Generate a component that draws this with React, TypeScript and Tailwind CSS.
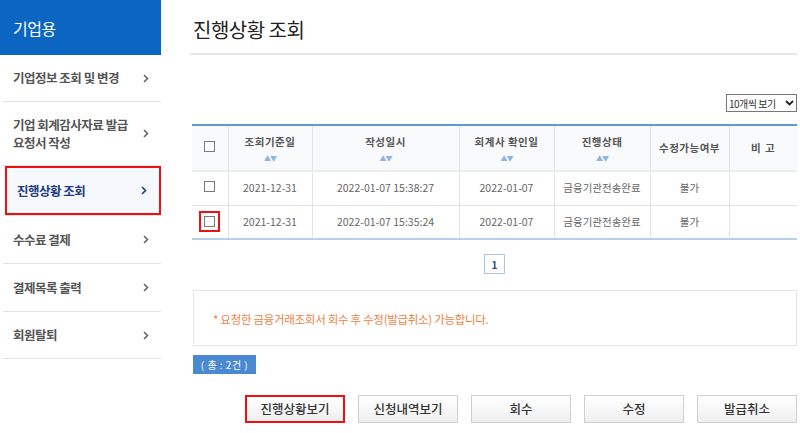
import React from "react";

const menu = [
  { label: ["기업정보 조회 및 변경"], h: "h-[47px]" },
  { label: ["기업 회계감사자료 발급", "요청서 작성"], h: "h-[64px]" },
  { label: ["진행상황 조회"], h: "h-[50px]", active: true },
  { label: ["수수료 결제"], h: "h-[48px]" },
  { label: ["결제목록 출력"], h: "h-[48px]" },
  { label: ["회원탈퇴"], h: "h-[47px]" },
];

const rows = [
  { base: "2021-12-31", created: "2022-01-07 15:38:27", confirm: "2022-01-07", status: "금융기관전송완료", editable: "불가" },
  { base: "2021-12-31", created: "2022-01-07 15:35:24", confirm: "2022-01-07", status: "금융기관전송완료", editable: "불가", marked: true },
];

const Sort = () => (
  <div className="text-[7px] leading-none text-[#8db4e2] tracking-[-1px] mt-[5px]">▲▼</div>
);

const Box = () => <span className="inline-block w-[11px] h-[11px] border border-[#7a7a7a] bg-white" />;

const Chevron = ({ color }: { color: string }) => (
  <svg width="6" height="9" viewBox="0 0 6 9">
    <path d="M1 1l3.5 3.5L1 8" stroke={color} strokeWidth="1.6" fill="none" />
  </svg>
);

const App = () => {
  return (
    <div
      className="w-[800px] h-[433px] flex bg-white overflow-hidden"
      style={{ fontFamily: '"Noto Sans CJK KR", "Noto Sans", sans-serif' }}
    >
      {/* Sidebar */}
      <aside className="w-[161px] shrink-0">
        <div className="h-[55px] bg-[#0b66c2] flex items-center pl-[13px] text-white text-[16px] tracking-[-0.5px]">
          기업용
        </div>
        {menu.map((m, i) => (
          <div key={i} className={`${m.h} ml-[3px] border-b border-[#e2e2e2] flex`}>
            <div
              className={`flex-1 flex items-center justify-between pl-[10px] pr-[12px] ${
                m.active ? "ml-[2px] border-2 border-[#ee1111] bg-[#f5f8fd] pl-[8px] pr-[10px]" : ""
              }`}
            >
              <div
                className={`text-[12.5px] leading-[18px] tracking-[-0.5px] ${
                  m.active ? "text-[#1e3d7b] font-bold" : "text-[#555] font-semibold"
                }`}
              >
                {m.label.map((l) => (
                  <div key={l}>{l}</div>
                ))}
              </div>
              <Chevron color={m.active ? "#1e3d7b" : "#666"} />
            </div>
          </div>
        ))}
      </aside>

      {/* Main */}
      <main className="flex-1 pl-[29px] pr-[3px] pt-[11px]">
        <div className="h-[44px] border-b-2 border-[#e6e6e6] flex items-center pl-[3px] pb-[4px]">
          <h1 className="text-[20px] text-[#222] tracking-[-0.5px]">진행상황 조회</h1>
        </div>

        <div className="flex justify-end mt-[39px]">
          <div className="h-[18px] w-[71px] border border-[#777] flex items-center justify-between px-[2px] text-[10px] text-[#333] tracking-[-0.5px]">
            <span>10개씩 보기</span>
            <svg width="9" height="6" viewBox="0 0 9 6">
              <path d="M1 1l3.5 3.5L8 1" stroke="#222" strokeWidth="1.8" fill="none" />
            </svg>
          </div>
        </div>

        {/* Table */}
        <table className="mt-[12px] ml-[2px] w-[605px] border-collapse text-[10.5px] text-[#666] table-fixed border-t-2 border-t-[#5b9bd6] border-b-2 border-b-[#b7d1ec]">
          <colgroup>
            <col className="w-[36px]" />
            <col className="w-[84px]" />
            <col className="w-[147px]" />
            <col className="w-[95px]" />
            <col className="w-[96px]" />
            <col className="w-[79px]" />
            <col className="w-[68px]" />
          </colgroup>
          <thead>
            <tr className="h-[46px] bg-[#f8fafc] border-b-2 border-[#ececec]">
              <th className="border-r border-[#e2e2e2]">
                <Box />
              </th>
              {["조회기준일", "작성일시", "회계사 확인일", "진행상태"].map((h) => (
                <th key={h} className="border-r border-[#e2e2e2] font-bold text-[#555] tracking-[0.5px]">
                  <div>{h}</div>
                  <Sort />
                </th>
              ))}
              <th className="border-r border-[#e2e2e2] font-bold text-[#555] tracking-[0.5px]">수정가능여부</th>
              <th className="font-bold text-[#555] tracking-[1px]">비 고</th>
            </tr>
          </thead>
          <tbody>
            {rows.map((r, i) => (
              <tr key={i} className={`h-[34px] text-center ${i === 0 ? "border-b border-[#e2e2e2]" : ""}`}>
                <td className="border-r border-[#e2e2e2]">
                  {r.marked ? (
                    <span className="inline-flex w-[21px] h-[21px] border-2 border-[#ee1111] items-center justify-center">
                      <Box />
                    </span>
                  ) : (
                    <Box />
                  )}
                </td>
                <td className="border-r border-[#e2e2e2]">{r.base}</td>
                <td className="border-r border-[#e2e2e2]">{r.created}</td>
                <td className="border-r border-[#e2e2e2]">{r.confirm}</td>
                <td className="border-r border-[#e2e2e2]">{r.status}</td>
                <td className="border-r border-[#e2e2e2]">{r.editable}</td>
                <td></td>
              </tr>
            ))}
          </tbody>
        </table>

        {/* Pagination */}
        <div className="flex justify-center mt-[14px] ml-[2px] w-[605px]">
          <span className="w-[21px] h-[20px] border border-[#a8c4e6] flex items-center justify-center text-[10px] font-bold text-[#264c8c]">
            1
          </span>
        </div>

        {/* Notice */}
        <div className="mt-[16px] ml-[3px] w-[604px] h-[56px] border border-[#e4e4e4] flex items-center pl-[19px] pt-[4px] text-[11.5px] text-[#f0813f] tracking-[-0.3px]">
          * 요청한 금융거래조회서 회수 후 수정(발급취소) 가능합니다.
        </div>

        <div className="mt-[9px] ml-[3px] w-[63px] h-[19px] bg-[#4a89d2] text-white text-[10px] flex items-center justify-center tracking-[0.5px]">
          ( 총 : 2건 )
        </div>

        {/* Buttons */}
        <div className="mt-[21px] flex justify-end gap-[13px]">
          {["진행상황보기", "신청내역보기", "회수", "수정", "발급취소"].map((b, i) => (
            <button
              key={b}
              className={`w-[100px] h-[28px] text-[12.5px] font-medium text-[#333] bg-gradient-to-b from-white to-[#efefef] ${
                i === 0 ? "border-2 border-[#ee1111]" : "border border-[#cfcfcf]"
              }`}
            >
              {b}
            </button>
          ))}
        </div>
      </main>
    </div>
  );
};

export default App;
